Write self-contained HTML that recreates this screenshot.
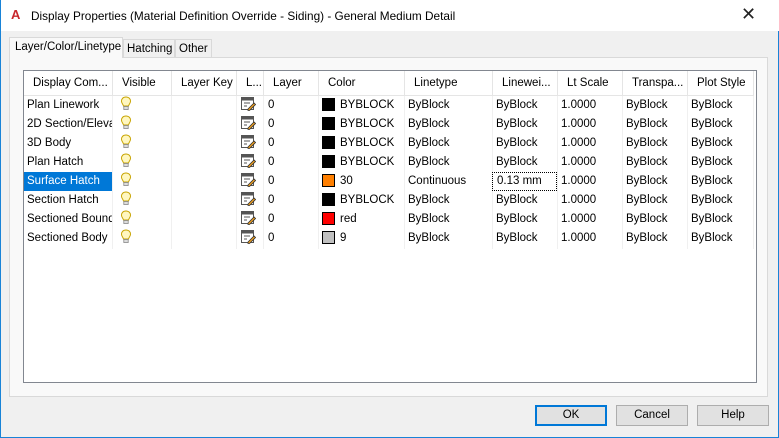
<!DOCTYPE html>
<html><head><style>
*{box-sizing:border-box;margin:0;padding:0}
body{width:779px;height:438px;overflow:hidden;background:#fff;font-family:"Liberation Sans",sans-serif;font-size:11.5px;color:#000;position:relative}
.win{position:absolute;left:0;top:0;width:779px;height:438px;border:1px solid #1883d7;border-top:none;background:#f0f0f0}
.title{position:absolute;left:0;top:0;width:779px;height:31px;background:#fff}
.title .t{position:absolute;left:30px;top:9px;font-size:11.8px}
.logo{position:absolute;left:10px;top:7px;font-weight:bold;color:#c8282d;font-size:13px}
.x{position:absolute;left:740px;top:4px;font-size:18px;font-weight:100;color:#222}
.tab{position:absolute;top:39px;height:18px;border:1px solid #d9d9d9;border-bottom:none;background:#f0f0f0;padding:3px 3px;font-size:11.5px;white-space:nowrap;overflow:hidden}
.panel{position:absolute;left:8px;top:57px;width:759px;height:340px;border:1px solid #d9d9d9;background:#f9f9f9}
.grid{position:absolute;left:22px;top:70px;width:734px;height:313px;border:1px solid #828790;background:#fff}
.cell{position:absolute;height:19px;line-height:18px;white-space:nowrap;overflow:hidden;padding-left:4px}
.hd{position:absolute;top:0;height:25px;line-height:25px;border-right:1px solid #e5e5e5;border-bottom:1px solid #e5e5e5;padding-left:9px;white-space:nowrap;overflow:hidden;background:#fff}
.vl{position:absolute;top:25px;height:153px;width:1px;background:#f0f0f0}
.sw{display:inline-block;width:13px;height:13px;border:1px solid #000;vertical-align:-3px;margin-right:5px}
.btn{position:absolute;top:405px;width:72px;height:21px;border:1px solid #adadad;background:#e1e1e1;text-align:center;line-height:19px}
</style></head><body>
<div class="win">
<div class="title"><span class="logo">A</span><span class="t">Display Properties (Material Definition Override - Siding) - General Medium Detail</span><span class="x">✕</span></div>
<div class="panel"></div>
<div class="tab" style="left:8px;top:37px;height:21px;background:#f9f9f9;width:114px;z-index:2;padding-top:3px;padding-left:5px">Layer/Color/Linetype</div>
<div class="tab" style="left:122px;width:52px;padding-left:3px">Hatching</div>
<div class="tab" style="left:174px;width:37px;padding-left:3px">Other</div>
<div class="grid" id="g"></div>
<div class="btn" style="left:534px;border:2px solid #0078d7;line-height:17px">OK</div>
<div class="btn" style="left:615px">Cancel</div>
<div class="btn" style="left:696px">Help</div>
</div>
<script>
var g=document.getElementById('g');
var cols=[[0,89,'Display Com...'],[89,59,'Visible'],[148,65,'Layer Key'],[213,27,'L...'],[240,55,'Layer'],[295,86,'Color'],[381,88,'Linetype'],[469,65,'Linewei...'],[534,65,'Lt Scale'],[599,65,'Transpa...'],[664,66,'Plot Style']];
var h='';
cols.forEach(function(c){h+='<div class="hd" style="left:'+c[0]+'px;width:'+c[1]+'px">'+c[2]+'</div>';h+='<div class="vl" style="left:'+(c[0]+c[1]-1)+'px"></div>';});
var rows=[['Plan Linework','#000','BYBLOCK','ByBlock','ByBlock'],['2D Section/Elevat','#000','BYBLOCK','ByBlock','ByBlock'],['3D Body','#000','BYBLOCK','ByBlock','ByBlock'],['Plan Hatch','#000','BYBLOCK','ByBlock','ByBlock'],['Surface Hatch','#ff7f00','30','Continuous','0.13 mm'],['Section Hatch','#000','BYBLOCK','ByBlock','ByBlock'],['Sectioned Bounda','#ff0000','red','ByBlock','ByBlock'],['Sectioned Body','#c0c0c0','9','ByBlock','ByBlock']];
var bulb='<svg width="12" height="15" viewBox="0 0 12 15" style="vertical-align:-3px"><path d="M6 1C3 1 1.5 3 1.5 5.2c0 2 1.6 3 2 4.8h5c.4-1.8 2-2.8 2-4.8C10.5 3 9 1 6 1z" fill="#fff7c0" stroke="#c8a400"/><rect x="3.8" y="10.5" width="4.4" height="3" fill="#ddd" stroke="#888" stroke-width=".8"/></svg>';
var ico='<svg width="16" height="15" viewBox="0 0 16 15" style="vertical-align:-3px"><rect x="1.5" y="1.5" width="12" height="12" fill="#fff" stroke="#555"/><rect x="1.5" y="1.5" width="12" height="3" fill="#555"/><path d="M4 7h6M4 10h3" stroke="#555"/><path d="M8 13l6-6 1.5 1.5-6 6H8z" fill="#f0a020" stroke="#333" stroke-width=".8"/></svg>';
rows.forEach(function(r,i){var y=25+i*19;var s='top:'+y+'px;';
var sel=i==4;
h+='<div class="cell" style="'+s+'left:0;width:88px;'+(sel?'background:#0078d7;color:#fff;':'')+'padding-left:3px">'+r[0]+'</div>';
h+='<div class="cell" style="'+s+'left:92px;width:40px">'+bulb+'</div>';
h+='<div class="cell" style="'+s+'left:212px;width:27px">'+ico+'</div>';
h+='<div class="cell" style="'+s+'left:240px;width:50px">0</div>';
h+='<div class="cell" style="'+s+'left:294px;width:86px;padding-left:4px"><span class="sw" style="background:'+r[1]+'"></span>'+r[2]+'</div>';
h+='<div class="cell" style="'+s+'left:380px;width:88px">'+r[3]+'</div>';
h+='<div class="cell" style="'+s+'left:468px;width:65px;'+(sel?'border:1px dotted #000;line-height:17px;':'')+'">'+r[4]+'</div>';
h+='<div class="cell" style="'+s+'left:533px;width:65px">1.0000</div>';
h+='<div class="cell" style="'+s+'left:598px;width:65px">ByBlock</div>';
h+='<div class="cell" style="'+s+'left:663px;width:65px">ByBlock</div>';
});
g.innerHTML=h;
</script>
</body></html>
